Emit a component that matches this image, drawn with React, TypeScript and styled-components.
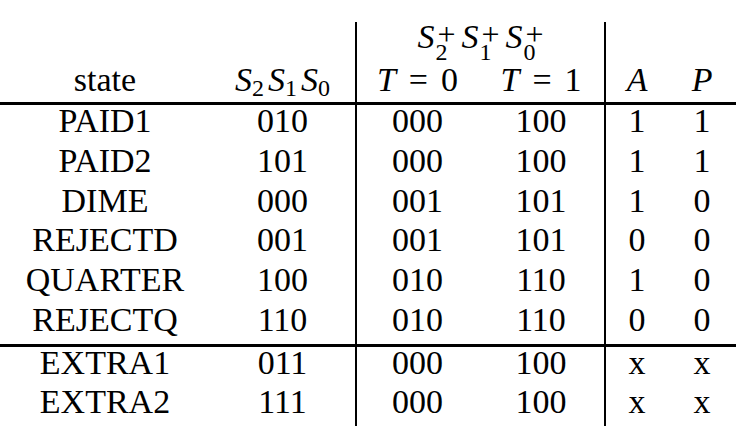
import { createGlobalStyle, styled } from "styled-components";

const GlobalStyle = createGlobalStyle`
  html, body {
    margin: 0;
    padding: 0;
    background: #fff;
  }
  body {
    overflow: hidden;
  }
`;

const Table = styled.table`
  margin-top: 22px;
  border-collapse: separate;
  border-spacing: 0;
  table-layout: fixed;
  width: 736px;
  font-family: "Liberation Serif", serif;
  font-size: 34px;
  color: #000;
`;

const Col = styled.col<{ $w: number }>`
  width: ${(p) => p.$w}px;
`;

const Cell = styled.td<{ $rule?: boolean; $under?: boolean }>`
  padding: 0 0 7.75px;
  line-height: 32px;
  text-align: center;
  vertical-align: top;
  white-space: nowrap;
  font-weight: normal;
  border-right: ${(p) => (p.$rule ? "2px solid #000" : "none")};
  border-bottom: ${(p) => (p.$under ? "3px solid #000" : "none")};
`;

const HeadCell = styled(Cell).attrs({ as: "th" })`
  padding-bottom: 6.5px;
`;

const TopCell = styled(Cell).attrs({ as: "th" })`
  padding: 0;
`;

const TopBox = styled.div`
  height: 41.5px;
  line-height: 30px;
`;

const Var = styled.i`
  font-style: italic;
`;

const Sub = styled.span`
  font-size: 24px;
  line-height: 0;
  vertical-align: -5px;
  margin-right: 4px;

  &:last-child {
    margin-right: 0;
  }
`;

const Group = styled.span`
  margin-right: 6px;

  &:last-child {
    margin-right: 0;
  }
`;

const Scripts = styled.span`
  display: inline-flex;
  flex-direction: column;
  align-items: flex-start;
  vertical-align: 3px;
  margin-left: 1px;
`;

const Sup = styled.span`
  font-size: 32px;
  line-height: 15px;
  margin-left: 2px;
`;

const Low = styled.span`
  font-size: 24px;
  line-height: 20px;
`;

const Rel = styled.span`
  margin: 0 13px;
`;

type Row = [string, string, string, string, string, string];

const main: Row[] = [
  ["PAID1", "010", "000", "100", "1", "1"],
  ["PAID2", "101", "000", "100", "1", "1"],
  ["DIME", "000", "001", "101", "1", "0"],
  ["REJECTD", "001", "001", "101", "0", "0"],
  ["QUARTER", "100", "010", "110", "1", "0"],
  ["REJECTQ", "110", "010", "110", "0", "0"],
];

const extra: Row[] = [
  ["EXTRA1", "011", "000", "100", "x", "x"],
  ["EXTRA2", "111", "000", "100", "x", "x"],
];

const StateRow = ({ row, under }: { row: Row; under?: boolean }) => (
  <tr>
    <Cell $under={under}>{row[0]}</Cell>
    <Cell $under={under} $rule>
      {row[1]}
    </Cell>
    <Cell $under={under}>{row[2]}</Cell>
    <Cell $under={under} $rule>
      {row[3]}
    </Cell>
    <Cell $under={under}>{row[4]}</Cell>
    <Cell $under={under}>{row[5]}</Cell>
  </tr>
);

export default function App() {
  return (
    <>
      <GlobalStyle />
      <Table>
        <colgroup>
          <Col $w={210} />
          <Col $w={147} />
          <Col $w={121} />
          <Col $w={128} />
          <Col $w={62} />
          <Col $w={68} />
        </colgroup>
        <thead>
          <tr>
            <TopCell>
              <TopBox />
            </TopCell>
            <TopCell $rule>
              <TopBox />
            </TopCell>
            <TopCell colSpan={2} $rule>
              <TopBox>
                {["2", "1", "0"].map((n) => (
                  <Group key={n}>
                    <Var>S</Var>
                    <Scripts>
                      <Sup>+</Sup>
                      <Low>{n}</Low>
                    </Scripts>
                  </Group>
                ))}
              </TopBox>
            </TopCell>
            <TopCell>
              <TopBox />
            </TopCell>
            <TopCell>
              <TopBox />
            </TopCell>
          </tr>
          <tr>
            <HeadCell $under>state</HeadCell>
            <HeadCell $under $rule>
              <Var>S</Var>
              <Sub>2</Sub>
              <Var>S</Var>
              <Sub>1</Sub>
              <Var>S</Var>
              <Sub>0</Sub>
            </HeadCell>
            <HeadCell $under>
              <Var>T</Var>
              <Rel>=</Rel>0
            </HeadCell>
            <HeadCell $under $rule>
              <Var>T</Var>
              <Rel>=</Rel>1
            </HeadCell>
            <HeadCell $under>
              <Var>A</Var>
            </HeadCell>
            <HeadCell $under>
              <Var>P</Var>
            </HeadCell>
          </tr>
        </thead>
        <tbody>
          {main.map((row, i) => (
            <StateRow key={row[0]} row={row} under={i === main.length - 1} />
          ))}
          {extra.map((row) => (
            <StateRow key={row[0]} row={row} />
          ))}
        </tbody>
      </Table>
    </>
  );
}
